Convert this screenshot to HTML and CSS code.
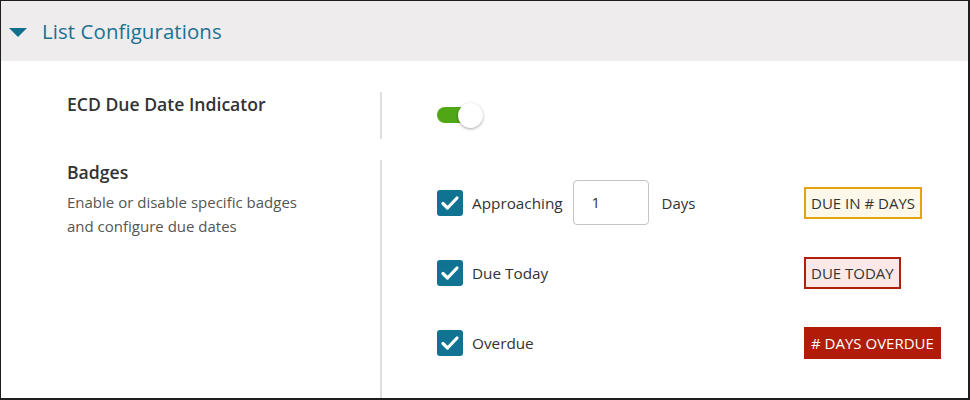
FILE: index.html
```html
<!DOCTYPE html>
<html>
<head>
<meta charset="utf-8">
<link rel="stylesheet" href="styles.css">
</head>
<body>
<div class="panel">
  <div class="header">
    <svg class="caret" width="18" height="9" viewBox="0 0 18 9"><polygon points="0,0 18,0 9,9" fill="#0f6f8c"/></svg>
    <span class="title">List Configurations</span>
  </div>
  <div class="content">
    <div class="row row-toggle">
      <div class="label-col">
        <div class="label">ECD Due Date Indicator</div>
      </div>
      <div class="value-col center">
        <div class="toggle"><span class="track"></span><span class="knob"></span></div>
      </div>
    </div>
    <div class="row row-badges">
      <div class="label-col">
        <div class="label">Badges</div>
        <div class="desc">Enable or disable specific badges<br>and configure due dates</div>
      </div>
      <div class="value-col options">
        <div class="option">
          <div class="opt-main">
            <span class="check"><svg width="26" height="26" viewBox="0 0 26 26"><path d="M6 13.5l4.5 4.5 9.5-10" fill="none" stroke="#fff" stroke-width="3.2" stroke-linecap="round" stroke-linejoin="round"/></svg></span>
            <span class="opt-label">Approaching</span>
            <span class="num">1</span>
            <span class="days">Days</span>
          </div>
          <span class="badge badge-soon">DUE IN # DAYS</span>
        </div>
        <div class="option">
          <div class="opt-main">
            <span class="check"><svg width="26" height="26" viewBox="0 0 26 26"><path d="M6 13.5l4.5 4.5 9.5-10" fill="none" stroke="#fff" stroke-width="3.2" stroke-linecap="round" stroke-linejoin="round"/></svg></span>
            <span class="opt-label">Due Today</span>
          </div>
          <span class="badge badge-today">DUE TODAY</span>
        </div>
        <div class="option">
          <div class="opt-main">
            <span class="check"><svg width="26" height="26" viewBox="0 0 26 26"><path d="M6 13.5l4.5 4.5 9.5-10" fill="none" stroke="#fff" stroke-width="3.2" stroke-linecap="round" stroke-linejoin="round"/></svg></span>
            <span class="opt-label">Overdue</span>
          </div>
          <span class="badge badge-over"># DAYS OVERDUE</span>
        </div>
      </div>
    </div>
  </div>
</div>
</body>
</html>
```
FILE: styles.css
```css
* { box-sizing: border-box; }
html, body { margin: 0; padding: 0; background: #fff; }
body { font-family: "Open Sans", "Noto Sans", sans-serif; color: #333; }
.panel {
  width: 970px; height: 400px;
  border: 1px solid #1e1e1e;
  border-bottom-width: 2px;
  border-right-width: 2px;
  overflow: hidden;
}
.header {
  height: 60px;
  background: #eeeced;
  display: flex;
  align-items: center;
  padding-left: 8px;
}
.caret { display: block; margin-top: 3px; }
.title {
  margin-left: 15px;
  font-size: 20.4px;
  color: #1b7190;
  letter-spacing: 0.1px;
}
.content { padding-top: 31px; }
.row {
  display: grid;
  grid-template-columns: 381px 1fr;
}
.row-toggle { height: 47px; margin-bottom: 21px; }
.label-col {
  border-right: 2px solid #dedede;
  padding-left: 66px;
}
.label {
  font-size: 17.6px;
  font-weight: 600;
  line-height: 24px;
  color: #333;
}
.desc {
  margin-top: 6px;
  font-size: 15px;
  line-height: 24px;
  color: #555;
}
.value-col { padding-left: 55px; }
.center { display: flex; align-items: center; }
.toggle { position: relative; width: 47px; height: 25px; }
.track {
  position: absolute; left: 0; top: 4px;
  width: 40px; height: 16px;
  border-radius: 8px;
  background: #4fa716;
}
.knob {
  position: absolute; left: 21px; top: 0;
  width: 25px; height: 25px; border-radius: 50%;
  background: #fff;
  box-shadow: 0 1px 3px rgba(0,0,0,0.35);
}
.row-badges { height: 240px; }
.options {
  padding-top: 20px;
  display: flex;
  flex-direction: column;
  gap: 25px;
}
.option {
  height: 45px;
  display: grid;
  grid-template-columns: 367px auto;
  align-items: center;
}
.opt-main { display: flex; align-items: center; }
.check {
  width: 26px; height: 26px;
  border-radius: 3px;
  background: #0f7391;
  display: block;
}
.check svg { display: block; }
.opt-label { margin-left: 9px; font-size: 15.3px; color: #333; }
.num {
  margin-left: 10px;
  width: 76px; height: 45px;
  border: 1px solid #c4c4c4;
  border-radius: 4px;
  padding-left: 18px;
  font-size: 15px;
  line-height: 43px;
  color: #333;
}
.days { margin-left: 13px; font-size: 15px; color: #333; }
.badge {
  justify-self: start;
  font-size: 15px;
  line-height: 28px;
  padding: 0 5px;
  border: 2px solid;
  color: #333;
}
.badge-soon { border-color: #e4a20c; background: #fdf8ea; }
.badge-today { border-color: #b01f0c; background: #fce9e7; }
.badge-over { border-color: #b01c08; background: #b01c08; color: #fff; }
```
